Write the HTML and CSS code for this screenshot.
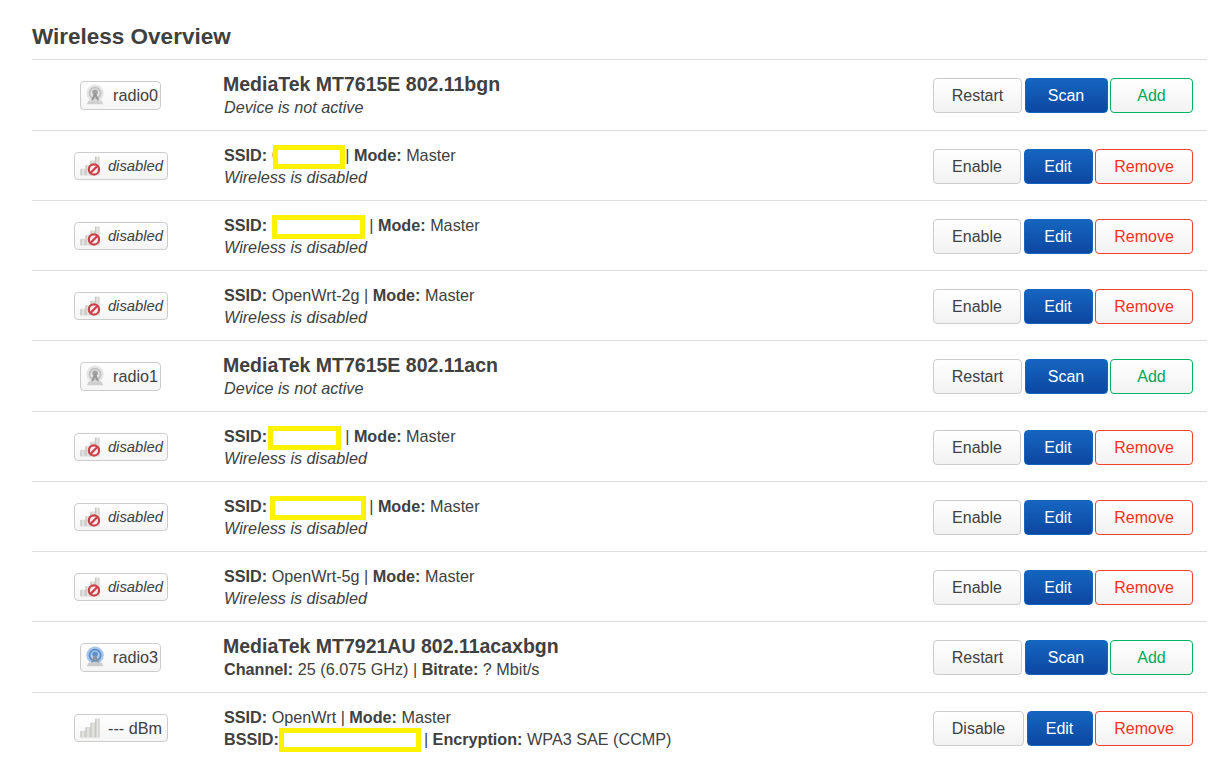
FILE: index.html
```html
<!DOCTYPE html>
<html lang="en">
<head>
    <meta charset="UTF-8">
    <title>Wireless Overview</title>
    <link rel="stylesheet" href="styles.css">
</head>
<body>
    <svg class="defs" width="0" height="0">
        <defs>
            <filter id="soft" x="-10%" y="-10%" width="120%" height="120%"><feGaussianBlur stdDeviation="0.45"/></filter>
            <linearGradient id="bar" x1="0" x2="1" y1="0" y2="0">
                <stop offset="0" stop-color="#bcbcb8"/>
                <stop offset="0.5" stop-color="#e8e8e4"/>
                <stop offset="1" stop-color="#c8c8c4"/>
            </linearGradient>
            <symbol id="radio-off" viewBox="0 0 24 24">
                <g filter="url(#soft)">
                    <circle cx="11" cy="10" r="9.500" fill="#e6e6e6"/>
                    <circle cx="11" cy="10" r="7" fill="#c2c2c2"/>
                    <circle cx="11" cy="10" r="5" fill="#e4e4e4"/>
                    <circle cx="11" cy="9" r="3" fill="#a2a2a2"/>
                    <path d="M10 10h2l3.500 8h-2l-2.500-4-2.500 4h-2z" fill="#959595"/>
                    <path d="M4 18h14l2 4H2z" fill="#cfcfcf"/>
                </g>
            </symbol>
            <symbol id="radio-on" viewBox="0 0 24 24">
                <g filter="url(#soft)">
                    <circle cx="11" cy="10" r="9.500" fill="#a9c6e8"/>
                    <circle cx="11" cy="10" r="7" fill="#5a8ecb"/>
                    <circle cx="11" cy="10" r="5" fill="#b5d0ee"/>
                    <circle cx="11" cy="9" r="3" fill="#5f8fca"/>
                    <path d="M10 10h2l3.500 8h-2l-2.500-4-2.500 4h-2z" fill="#8b9199"/>
                    <path d="M4 18h14l2 4H2z" fill="#cbcbcb"/>
                </g>
            </symbol>
            <symbol id="signal" viewBox="0 0 24 24">
                <g filter="url(#soft)" fill="url(#bar)">
                    <rect x="1.500" y="15" width="5.500" height="7.500" rx="1"/>
                    <rect x="7" y="11" width="5.500" height="11.500" rx="1"/>
                    <rect x="12.500" y="6" width="5.500" height="16.500" rx="1"/>
                    <rect x="17.500" y="1.500" width="5" height="21" rx="1"/>
                </g>
            </symbol>
            <symbol id="signal-off" viewBox="0 0 24 24">
                <use href="#signal"/>
                <circle cx="16.400" cy="15.800" r="5.600" fill="#f6eeee" stroke="#c9424a" stroke-width="2.400"/>
                <path d="M12.400 19.800l8-8" stroke="#c9424a" stroke-width="2.400"/>
            </symbol>
        </defs>
    </svg>

    <h2 class="page-title">Wireless Overview</h2>

    <div class="table">
        <div class="row row-radio">
            <div class="cell-badge"><span class="badge"><svg class="icon"><use href="#radio-off"/></svg>radio0</span></div>
            <div class="cell-info">
                <div class="title">MediaTek MT7615E 802.11bgn</div>
                <em>Device is not active</em>
            </div>
            <div class="actions">
                <button class="btn w-restart">Restart</button>
                <button class="btn btn-blue w-scan">Scan</button>
                <button class="btn btn-green w-scan">Add</button>
            </div>
        </div>
        <div class="row">
            <div class="cell-badge"><span class="badge off"><svg class="icon"><use href="#signal-off"/></svg><em>disabled</em></span></div>
            <div class="cell-info">
                <div><b>SSID:</b> <span class="peek">O</span><span class="mask mask-a"></span>| <b>Mode:</b> Master</div>
                <em>Wireless is disabled</em>
            </div>
            <div class="actions">
                <button class="btn w-enable">Enable</button>
                <button class="btn btn-blue w-edit">Edit</button>
                <button class="btn btn-red w-remove">Remove</button>
            </div>
        </div>
        <div class="row">
            <div class="cell-badge"><span class="badge off"><svg class="icon"><use href="#signal-off"/></svg><em>disabled</em></span></div>
            <div class="cell-info">
                <div><b>SSID:</b> <span class="peek">O</span><span class="mask mask-b"></span>| <b>Mode:</b> Master</div>
                <em>Wireless is disabled</em>
            </div>
            <div class="actions">
                <button class="btn w-enable">Enable</button>
                <button class="btn btn-blue w-edit">Edit</button>
                <button class="btn btn-red w-remove">Remove</button>
            </div>
        </div>
        <div class="row">
            <div class="cell-badge"><span class="badge off"><svg class="icon"><use href="#signal-off"/></svg><em>disabled</em></span></div>
            <div class="cell-info">
                <div><b>SSID:</b> OpenWrt-2g | <b>Mode:</b> Master</div>
                <em>Wireless is disabled</em>
            </div>
            <div class="actions">
                <button class="btn w-enable">Enable</button>
                <button class="btn btn-blue w-edit">Edit</button>
                <button class="btn btn-red w-remove">Remove</button>
            </div>
        </div>
        <div class="row row-radio">
            <div class="cell-badge"><span class="badge"><svg class="icon"><use href="#radio-off"/></svg>radio1</span></div>
            <div class="cell-info">
                <div class="title">MediaTek MT7615E 802.11acn</div>
                <em>Device is not active</em>
            </div>
            <div class="actions">
                <button class="btn w-restart">Restart</button>
                <button class="btn btn-blue w-scan">Scan</button>
                <button class="btn btn-green w-scan">Add</button>
            </div>
        </div>
        <div class="row">
            <div class="cell-badge"><span class="badge off"><svg class="icon"><use href="#signal-off"/></svg><em>disabled</em></span></div>
            <div class="cell-info">
                <div><b>SSID:</b> <span class="mask mask-c"></span>| <b>Mode:</b> Master</div>
                <em>Wireless is disabled</em>
            </div>
            <div class="actions">
                <button class="btn w-enable">Enable</button>
                <button class="btn btn-blue w-edit">Edit</button>
                <button class="btn btn-red w-remove">Remove</button>
            </div>
        </div>
        <div class="row">
            <div class="cell-badge"><span class="badge off"><svg class="icon"><use href="#signal-off"/></svg><em>disabled</em></span></div>
            <div class="cell-info">
                <div><b>SSID:</b> <span class="mask mask-d"></span>| <b>Mode:</b> Master</div>
                <em>Wireless is disabled</em>
            </div>
            <div class="actions">
                <button class="btn w-enable">Enable</button>
                <button class="btn btn-blue w-edit">Edit</button>
                <button class="btn btn-red w-remove">Remove</button>
            </div>
        </div>
        <div class="row">
            <div class="cell-badge"><span class="badge off"><svg class="icon"><use href="#signal-off"/></svg><em>disabled</em></span></div>
            <div class="cell-info">
                <div><b>SSID:</b> OpenWrt-5g | <b>Mode:</b> Master</div>
                <em>Wireless is disabled</em>
            </div>
            <div class="actions">
                <button class="btn w-enable">Enable</button>
                <button class="btn btn-blue w-edit">Edit</button>
                <button class="btn btn-red w-remove">Remove</button>
            </div>
        </div>
        <div class="row row-radio">
            <div class="cell-badge"><span class="badge"><svg class="icon"><use href="#radio-on"/></svg>radio3</span></div>
            <div class="cell-info">
                <div class="title">MediaTek MT7921AU 802.11acaxbgn</div>
                <div><b>Channel:</b> 25 (6.075 GHz) | <b>Bitrate:</b> ? Mbit/s</div>
            </div>
            <div class="actions">
                <button class="btn w-restart">Restart</button>
                <button class="btn btn-blue w-scan">Scan</button>
                <button class="btn btn-green w-scan">Add</button>
            </div>
        </div>
        <div class="row row-radio">
            <div class="cell-badge"><span class="badge off"><svg class="icon"><use href="#signal"/></svg>--- dBm</span></div>
            <div class="cell-info">
                <div><b>SSID:</b> OpenWrt | <b>Mode:</b> Master</div>
                <div><b>BSSID:</b> <span class="mask mask-e"></span>| <b>Encryption:</b> WPA3 SAE (CCMP)</div>
            </div>
            <div class="actions">
                <button class="btn w-disable">Disable</button>
                <button class="btn btn-blue w-edit-s">Edit</button>
                <button class="btn btn-red w-remove">Remove</button>
            </div>
        </div>
    </div>
</body>
</html>
```

FILE: styles.css
```css
body {
    font-family: "Liberation Sans", Arial, sans-serif;
    font-size: 16.2px;
    line-height: 22px;
    margin: 0;
    padding: 0 9px 0 32px;
    background-color: #fff;
    color: #404040;
}
.defs {
    position: absolute;
}
.page-title {
    font-size: 22.5px;
    line-height: 26px;
    font-weight: bold;
    margin: 0;
    padding: 24px 0 9px;
}
.row {
    display: flex;
    align-items: center;
    height: 69px;
    border-top: 1px solid #ddd;
    padding-right: 14px;
}
.row-radio {
    height: 70px;
}
.cell-badge {
    width: 177px;
    flex: none;
    display: flex;
    justify-content: center;
}
.badge {
    display: inline-flex;
    align-items: center;
    height: 27px;
    padding: 0 2px 0 4px;
    border: 1px solid #ccc;
    border-radius: 4px;
    background: linear-gradient(to bottom, #fff, #f5f5f5);
}
.badge.off {
    box-sizing: border-box;
    width: 94px;
    height: 28px;
    padding: 0 4px;
    margin-left: 1px;
}
.badge.off .icon {
    margin-right: 7px;
}
.badge em {
    font-size: 14.8px;
}
.icon {
    width: 22px;
    height: 22px;
    margin-right: 6px;
}
.cell-info {
    flex: 1;
    padding: 1px 0 0 15px;
    white-space: nowrap;
}
.row-radio .cell-info {
    padding-top: 0;
    margin-bottom: 1px;
}
.title {
    font-size: 19.5px;
    font-weight: bold;
    line-height: 24px;
    margin-left: -1px;
}
.mask {
    display: inline-block;
    height: 24px;
    box-sizing: border-box;
    border: 5px solid #fff200;
    background: #fff;
    vertical-align: middle;
    margin: -4px 0;
    position: relative;
}
.peek {
    color: #c08040;
    margin-right: -9px;
}
.mask-a { width: 72px; margin-left: -2px; margin-right: 0; }
.mask-b { width: 93px; margin-left: -3px; margin-right: 4px; }
.mask-c { width: 73px; margin-left: -3.5px; margin-right: 4px; }
.mask-d { width: 96px; margin-left: -1.5px; margin-right: 3px; }
.mask-e { width: 142px; margin-left: -4.5px; margin-right: 3px; }
.actions {
    display: flex;
    gap: 2.5px;
    flex: none;
    margin-top: 2px;
}
.row-radio .actions {
    margin-top: 0;
}
.btn {
    height: 35px;
    padding: 0;
    font-family: inherit;
    font-size: 16px;
    color: #404040;
    border: 1px solid #ccc;
    border-radius: 4px;
    background: linear-gradient(to bottom, #fff, #f2f2f2);
}
.row-radio .btn {
    padding-top: 2px;
}
.btn-blue {
    color: #fff;
    border-color: #1565c0;
    background: linear-gradient(to bottom, #1565c0, #0d47a1);
}
.btn-green {
    color: #00a854;
    border-color: #00b35f;
}
.btn-red {
    color: #f5301e;
    border-color: #f0402e;
}
.w-restart { width: 89px; }
.w-scan { width: 83px; }
.w-enable { width: 88px; }
.w-edit { width: 69px; }
.w-remove { width: 98px; }
.w-disable { width: 91px; }
.w-edit-s { width: 66px; }
```
